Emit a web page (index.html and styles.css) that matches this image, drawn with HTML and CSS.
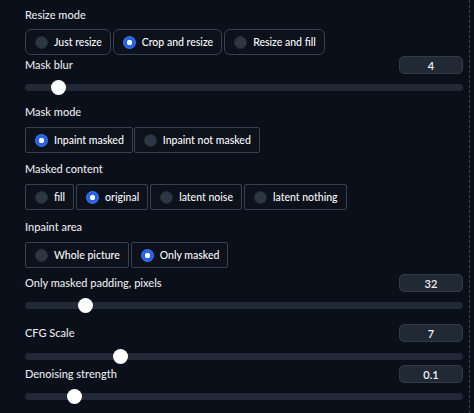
FILE: index.html
```html
<!DOCTYPE html>
<html lang="en">
<head>
    <meta charset="UTF-8">
    <title>img2img settings</title>
    <link rel="stylesheet" href="styles.css">
</head>
<body>
    <div class="panel">
        <div class="field">
            <span class="label">Resize mode</span>
            <div class="radio-group rounded">
                <label class="radio-item"><input type="radio" name="resize"><span>Just resize</span></label>
                <label class="radio-item"><input type="radio" name="resize" checked><span>Crop and resize</span></label>
                <label class="radio-item"><input type="radio" name="resize"><span>Resize and fill</span></label>
            </div>
        </div>

        <div class="slider slider-blur">
            <div class="slider-head">
                <span class="label">Mask blur</span>
                <input class="num" type="number" value="4">
            </div>
            <input class="range" type="range" min="0" max="64" step="1" value="4">
        </div>

        <div class="field field-mask">
            <span class="label">Mask mode</span>
            <div class="radio-group">
                <label class="radio-item"><input type="radio" name="mode" checked><span>Inpaint masked</span></label>
                <label class="radio-item"><input type="radio" name="mode"><span>Inpaint not masked</span></label>
            </div>
        </div>

        <div class="field field-content">
            <span class="label">Masked content</span>
            <div class="radio-group">
                <label class="radio-item"><input type="radio" name="content"><span>fill</span></label>
                <label class="radio-item"><input type="radio" name="content" checked><span>original</span></label>
                <label class="radio-item"><input type="radio" name="content"><span>latent noise</span></label>
                <label class="radio-item"><input type="radio" name="content"><span>latent nothing</span></label>
            </div>
        </div>

        <div class="field field-area">
            <span class="label">Inpaint area</span>
            <div class="radio-group">
                <label class="radio-item"><input type="radio" name="area"><span>Whole picture</span></label>
                <label class="radio-item"><input type="radio" name="area" checked><span>Only masked</span></label>
            </div>
        </div>

        <div class="slider slider-padding">
            <div class="slider-head">
                <span class="label">Only masked padding, pixels</span>
                <input class="num" type="number" value="32">
            </div>
            <input class="range" type="range" min="0" max="256" step="4" value="32">
        </div>

        <div class="slider slider-cfg">
            <div class="slider-head">
                <span class="label">CFG Scale</span>
                <input class="num" type="number" value="7">
            </div>
            <input class="range" type="range" min="1" max="30" step="0.5" value="7">
        </div>

        <div class="slider slider-denoise">
            <div class="slider-head">
                <span class="label">Denoising strength</span>
                <input class="num" type="number" value="0.1">
            </div>
            <input class="range" type="range" min="0" max="1" step="0.01" value="0.1">
        </div>
    </div>
</body>
</html>
```

FILE: styles.css
```css
body {
    margin: 0;
    background-color: #0b0f19;
    font-family: Lato, 'Noto Sans', sans-serif;
    color: #e5e7eb;
    height: 413px;
    overflow: hidden;
}
.panel {
    width: 470px;
    min-height: 413px;
    box-sizing: border-box;
    padding: 7px 6px 0 25px;
    border-right: 1px dashed #3a4150;
}
.label {
    display: block;
    font-size: 11px;
    font-weight: 500;
    line-height: 16px;
    color: #e5e7eb;
}
.radio-group {
    display: flex;
    gap: 2px;
    margin-top: 6px;
}
.radio-item {
    display: flex;
    align-items: center;
    gap: 6px;
    height: 26px;
    box-sizing: border-box;
    padding: 0 8px 0 9px;
    border: 1px solid #374151;
    border-radius: 2px;
    background-color: #0c111c;
    font-size: 10.5px;
    font-weight: 500;
    color: #f9fafb;
}
.rounded .radio-item {
    border-radius: 6px;
}
.radio-item input {
    -webkit-appearance: none;
    appearance: none;
    width: 13px;
    height: 13px;
    margin: 0;
    border-radius: 50%;
    background-color: #2f3643;
    border: 1px solid #262c38;
    box-sizing: border-box;
}
.radio-item input:checked {
    background-color: #2563eb;
    border-color: #3b74f0;
    background-image: radial-gradient(circle, #ffffff 0 2.5px, #2563eb 3px);
}
.field-mask {
    margin-top: 13px;
}
.field-content {
    margin-top: 8px;
}
.field-area {
    margin-top: 9px;
}
.field-mask .radio-group,
.field-content .radio-group,
.field-area .radio-group {
    margin-top: 7px;
    gap: 1px;
}
.field-content .radio-group,
.field-area .radio-group {
    gap: 2px;
}
.slider-head {
    display: flex;
    justify-content: space-between;
    align-items: center;
    height: 18px;
}
.slider-blur {
    margin-top: 1px;
}
.slider-padding {
    margin-top: 6px;
}
.slider-cfg {
    margin-top: 15px;
}
.slider-denoise {
    margin-top: 5px;
}
.num {
    width: 64px;
    height: 18px;
    box-sizing: border-box;
    padding: 0;
    border: 1px solid #323a48;
    border-radius: 5px;
    background-color: #212935;
    color: #f3f4f6;
    font-family: Lato, 'Noto Sans', sans-serif;
    font-size: 11px;
    font-weight: 600;
    text-align: center;
    -moz-appearance: textfield;
}
.num::-webkit-inner-spin-button,
.num::-webkit-outer-spin-button {
    -webkit-appearance: none;
    margin: 0;
}
.range {
    -webkit-appearance: none;
    appearance: none;
    display: block;
    width: 100%;
    height: 7px;
    margin: 10px 0 0;
    background: transparent;
}
.slider-cfg .range {
    margin-top: 11px;
}
.range::-webkit-slider-runnable-track {
    height: 7px;
    border-radius: 4px;
    background-color: #212836;
}
.range::-webkit-slider-thumb {
    -webkit-appearance: none;
    width: 15px;
    height: 15px;
    margin-top: -4px;
    border-radius: 50%;
    background-color: #ffffff;
    border: none;
}
```
